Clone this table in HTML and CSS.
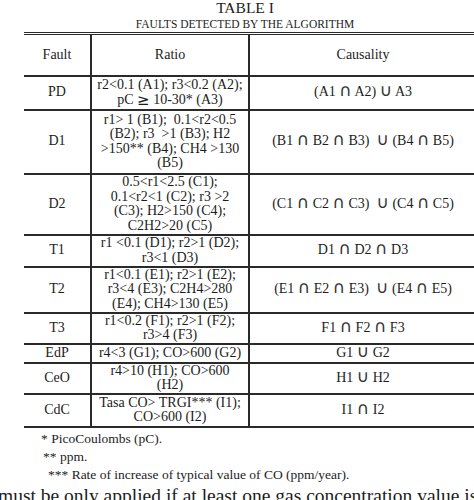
FILE: index.html
```html
<!DOCTYPE html>
<html lang="en">
<head>
<meta charset="utf-8">
<title>Table I</title>
<link rel="stylesheet" href="styles.css">
</head>
<body>
<div class="page">
  <div class="title">TABLE I</div>
  <div class="subtitle">FAULTS DETECTED BY THE ALGORITHM</div>
  <table class="faults">
    <colgroup><col class="c-fault"><col class="c-ratio"><col class="c-caus"></colgroup>
    <thead>
      <tr class="r-head"><th>Fault</th><th>Ratio</th><th>Causality</th></tr>
    </thead>
    <tbody>
      <tr class="r-pd"><td>PD</td><td class="ratio">r2&lt;0.1 (A1); r3&lt;0.2 (A2);<br>pC <span class="ge">≥</span> 10-30* (A3)</td><td>(A1 <span class="op">∩</span> A2) <span class="op">∪</span> A3</td></tr>
      <tr class="r-d1"><td>D1</td><td class="ratio">r1&gt; 1 (B1); &nbsp;0.1&lt;r2&lt;0.5<br>(B2); r3 &nbsp;&gt;1 (B3); H2<br>&gt;150** (B4); CH4 &gt;130<br>(B5)</td><td>(B1 <span class="op">∩</span> B2 <span class="op">∩</span> B3) &nbsp;<span class="op">∪</span> (B4 <span class="op">∩</span> B5)</td></tr>
      <tr class="r-d2"><td>D2</td><td class="ratio">0.5&lt;r1&lt;2.5 (C1);<br>0.1&lt;r2&lt;1 (C2); r3 &gt;2<br>(C3); H2&gt;150 (C4);<br>C2H2&gt;20 (C5)</td><td>(C1 <span class="op">∩</span> C2 <span class="op">∩</span> C3) &nbsp;<span class="op">∪</span> (C4 <span class="op">∩</span> C5)</td></tr>
      <tr class="r-t1"><td>T1</td><td class="ratio">r1 &lt;0.1 (D1); r2&gt;1 (D2);<br>r3&lt;1 (D3)</td><td>D1 <span class="op">∩</span> D2 <span class="op">∩</span> D3</td></tr>
      <tr class="r-t2"><td>T2</td><td class="ratio">r1&lt;0.1 (E1); r2&gt;1 (E2);<br>r3&lt;4 (E3); C2H4&gt;280<br>(E4); CH4&gt;130 (E5)</td><td>(E1 <span class="op">∩</span> E2 <span class="op">∩</span> E3) &nbsp;<span class="op">∪</span> (E4 <span class="op">∩</span> E5)</td></tr>
      <tr class="r-t3"><td>T3</td><td class="ratio">r1&lt;0.2 (F1); r2&gt;1 (F2);<br>r3&gt;4 (F3)</td><td>F1 <span class="op">∩</span> F2 <span class="op">∩</span> F3</td></tr>
      <tr class="r-edp"><td>EdP</td><td class="ratio">r4&lt;3 (G1); CO&gt;600 (G2)</td><td>G1 <span class="op">∪</span> G2</td></tr>
      <tr class="r-ceo"><td>CeO</td><td class="ratio">r4&gt;10 (H1); CO&gt;600<br>(H2)</td><td>H1 <span class="op">∪</span> H2</td></tr>
      <tr class="r-cdc"><td>CdC</td><td class="ratio">Tasa CO&gt; TRGI*** (I1);<br>CO&gt;600 (I2)</td><td>I1 <span class="op">∩</span> I2</td></tr>
    </tbody>
  </table>
  <div class="notes">
    <div class="note">* PicoCoulombs (pC).</div>
    <div class="note n2">** ppm.</div>
    <div class="note n3">*** Rate of increase of typical value of CO (ppm/year).</div>
  </div>
</div>
<p class="body-text">must be only applied if at least one gas concentration value is</p>
</body>
</html>
```

FILE: styles.css
```css
html, body {
  margin: 0;
  padding: 0;
  background: #ffffff;
}

body {
  width: 474px;
  height: 500px;
  overflow: hidden;
  font-family: "Liberation Serif", "Times New Roman", serif;
  color: #1c1c1c;
}

.page {
  padding-left: 24px;
  width: 450px;
}

.title {
  font-size: 15.5px;
  line-height: 15px;
  height: 17px;
  text-align: center;
  padding-right: 8px;
}

.subtitle {
  font-size: 11.5px;
  line-height: 15px;
  height: 15px;
  text-align: center;
  padding-right: 8px;
}

.faults {
  width: 452px;
  border-collapse: collapse;
  border-top: 3px double #2a2a2a;
  font-size: 14px;
  line-height: 14.5px;
  table-layout: fixed;
}

.c-fault { width: 67px; }
.c-ratio { width: 158px; }
.c-caus { width: 227px; }

.faults th,
.faults td {
  padding: 0;
  text-align: center;
  vertical-align: middle;
  font-weight: normal;
  border-bottom: 2px solid #2a2a2a;
  border-left: 2px solid #2a2a2a;
  white-space: nowrap;
}

.faults th:first-child,
.faults td:first-child {
  border-left: none;
}

.op {
  font-family: "DejaVu Sans", sans-serif;
  font-size: 17px;
  line-height: 0;
  font-weight: normal;
  color: #333;
}

.ge {
  font-family: "DejaVu Sans", sans-serif;
  font-size: 15px;
  line-height: 0;
  vertical-align: -1px;
}

.r-head { height: 42px; }
.r-pd { height: 34px; }
.r-d1 { height: 64px; }
.r-d2 { height: 61px; }
.r-t1 { height: 32px; }
.r-t2 { height: 46px; }
.r-t3 { height: 30px; }
.r-edp { height: 19px; }
.r-ceo { height: 30px; }
.r-cdc { height: 33px; }

.notes {
  padding-left: 17px;
  padding-top: 2px;
  font-size: 13.5px;
  line-height: 18px;
}

.n2 { padding-left: 2px; }
.n3 { padding-left: 7px; }

.body-text {
  margin: 0;
  margin-top: 1px;
  margin-left: -2px;
  font-size: 19.5px;
  line-height: 22px;
  white-space: nowrap;
}
```
